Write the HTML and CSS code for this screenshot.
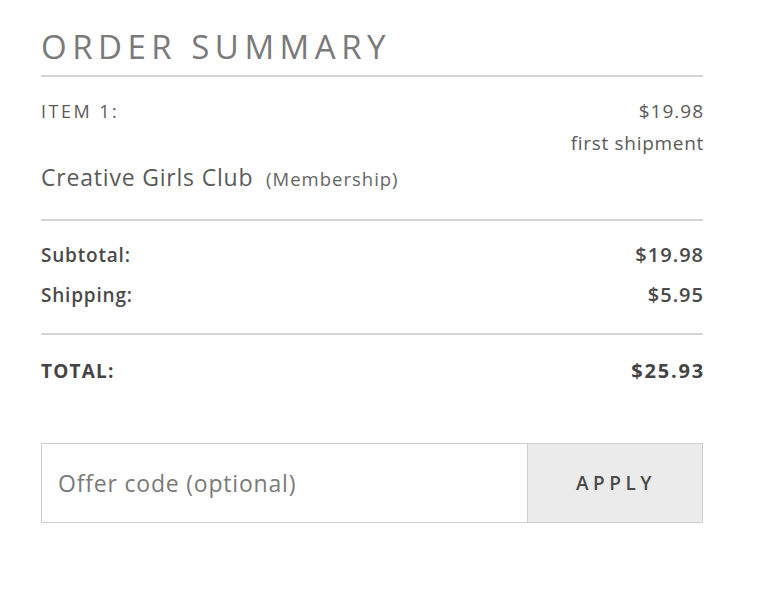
FILE: index.html
```html
<!DOCTYPE html>
<html>
<head>
<meta charset="utf-8">
<link rel="stylesheet" href="styles.css">
</head>
<body>
<div class="summary">
  <h1 class="title">ORDER SUMMARY</h1>
  <div class="item">
    <div class="item-head">
      <span class="item-label">ITEM 1:</span>
      <div class="item-price">
        <div class="price">$19.98</div>
        <div class="note">first shipment</div>
      </div>
    </div>
    <div class="item-name">Creative Girls Club <span class="item-type">(Membership)</span></div>
  </div>
  <div class="totals">
    <div class="row"><span>Subtotal:</span><span class="amt">$19.98</span></div>
    <div class="row"><span>Shipping:</span><span class="amt">$5.95</span></div>
  </div>
  <div class="grand">
    <div class="row total"><span>TOTAL:</span><span class="amt">$25.93</span></div>
  </div>
  <form class="offer">
    <input class="offer-input" type="text" placeholder="Offer code (optional)">
    <button class="offer-btn" type="button">APPLY</button>
  </form>
</div>
</body>
</html>
```
FILE: styles.css
```css
html, body {
  margin: 0;
  padding: 0;
  background: #fff;
}
body {
  font-family: "Open Sans", "Lato", sans-serif;
  color: #555;
}
.summary {
  width: 662px;
  margin-left: 41px;
  padding-top: 28px;
}
.title {
  margin: 0;
  font-size: 33px;
  font-weight: 400;
  letter-spacing: 5.5px;
  color: #7a7a7a;
  line-height: 38px;
  padding-bottom: 9px;
  border-bottom: 2px solid #d4d4d4;
}
.item {
  padding: 22px 0 26px;
  border-bottom: 2px solid #d4d4d4;
}
.item-head {
  display: flex;
  justify-content: space-between;
  align-items: flex-start;
}
.item-label {
  font-size: 18px;
  letter-spacing: 2.5px;
  color: #5a5a5a;
  line-height: 24px;
}
.item-price {
  text-align: right;
  font-size: 19px;
  color: #5a5a5a;
  line-height: 24px;
  margin-right: -1px;
}
.item-price .price {
  letter-spacing: 1px;
}
.item-price .note {
  margin-top: 8px;
  letter-spacing: 0.7px;
}
.item-name {
  margin-top: 8px;
  font-size: 23px;
  letter-spacing: 0.8px;
  line-height: 28px;
  color: #5a5a5a;
}
.item-type {
  font-size: 18.5px;
  letter-spacing: 1px;
  margin-left: 6px;
  color: #666;
}
.totals {
  padding: 22px 0 26px;
  border-bottom: 2px solid #d4d4d4;
  display: flex;
  flex-direction: column;
  gap: 16px;
}
.row {
  display: flex;
  justify-content: space-between;
  font-size: 19px;
  line-height: 24px;
  font-weight: 600;
  letter-spacing: 0.8px;
  color: #4a4a4a;
}
.row .amt {
  font-size: 20px;
  letter-spacing: 1px;
  margin-right: -1px;
}
.grand {
  padding-top: 24px;
}
.row.total {
  font-weight: 700;
  letter-spacing: 1.2px;
  color: #444;
}
.row.total .amt {
  letter-spacing: 1.8px;
  margin-right: -2px;
}
.offer {
  display: flex;
  margin: 60px 0 0;
  height: 78px;
  border: 1px solid #cfcfcf;
}
.offer-input {
  flex: 1;
  border: none;
  border-right: 1px solid #cfcfcf;
  padding: 0 0 0 16px;
  font-family: "Open Sans", sans-serif;
  font-size: 23px;
  letter-spacing: 0.8px;
  color: #555;
  outline: none;
  margin: 0;
}
.offer-input::placeholder {
  color: #7a7a7a;
}
.offer-btn {
  width: 174px;
  border: none;
  background: #ebebeb;
  font-family: "Open Sans", sans-serif;
  font-size: 19px;
  font-weight: 600;
  letter-spacing: 4.5px;
  text-indent: 2px;
  color: #4a4a4a;
  margin: 0;
  padding: 0;
}
```
